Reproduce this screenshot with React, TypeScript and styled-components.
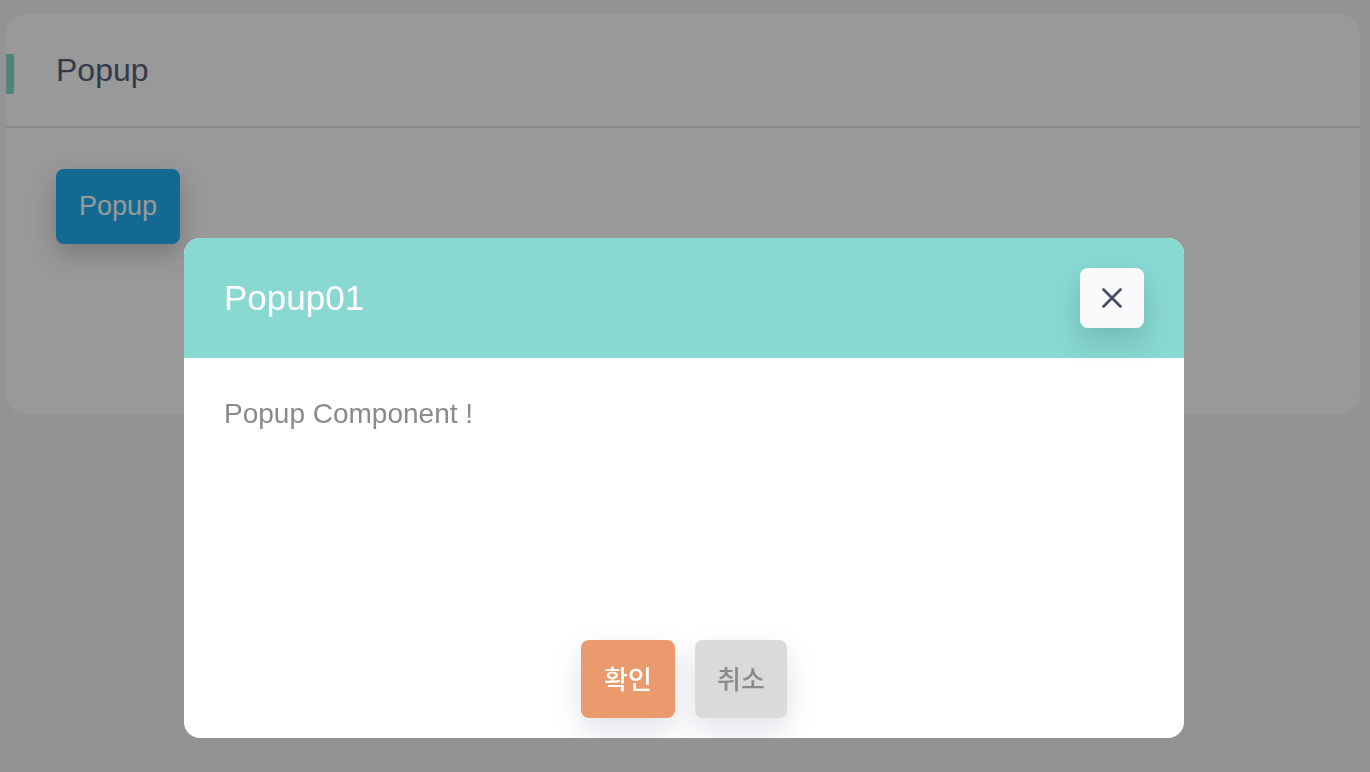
import React from "react";
import styled, { createGlobalStyle } from "styled-components";

const Global = createGlobalStyle`
  html, body { margin: 0; padding: 0; }
  body {
    background: #f3f5f8;
    font-family: "Liberation Sans", Arial, "Noto Sans CJK KR", sans-serif;
  }
`;

const Page = styled.div`
  padding: 14px 10px 0 6px;
  height: 772px;
  box-sizing: border-box;
`;

const Card = styled.section`
  background: #ffffff;
  border-radius: 20px;
  height: 400px;
  display: flex;
  flex-direction: column;
  overflow: hidden;
`;

const CardHeader = styled.header`
  height: 114px;
  display: flex;
  align-items: flex-start;
  border-bottom: 2px solid #e6e6e6;
  box-sizing: border-box;
`;

const Accent = styled.span`
  width: 8px;
  height: 40px;
  margin-top: 40px;
  background: #86dad2;
  margin-right: 42px;
`;

const CardTitle = styled.h2`
  margin: 0;
  line-height: 112px;
  font-size: 32px;
  font-weight: 400;
  color: #55627a;
`;

const CardBody = styled.div`
  padding: 41px 50px;
`;

const OpenButton = styled.button`
  height: 75px;
  width: 124px;
  padding: 0;
  border: none;
  border-radius: 8px;
  background: #1eb1f6;
  color: #ffffff;
  font-family: inherit;
  font-size: 27px;
  box-shadow: 0 10px 24px rgba(40, 40, 70, 0.25);
`;

const Overlay = styled.div`
  position: fixed;
  inset: 0;
  background: rgba(0, 0, 0, 0.4);
  display: flex;
  justify-content: center;
  align-items: flex-start;
  padding: 238px 2px 0 0;
  box-sizing: border-box;
`;

const Modal = styled.div`
  width: 1000px;
  height: 500px;
  background: #ffffff;
  border-radius: 16px;
  overflow: hidden;
  display: flex;
  flex-direction: column;
`;

const ModalHeader = styled.div`
  height: 120px;
  flex: none;
  background: #89d8d2;
  display: flex;
  align-items: center;
  justify-content: space-between;
  padding: 0 40px;
  position: relative;
  z-index: 1;
`;

const ModalTitle = styled.h3`
  margin: 0;
  font-size: 35px;
  font-weight: 400;
  color: #ffffff;
`;

const CloseButton = styled.button`
  width: 64px;
  height: 60px;
  border: none;
  border-radius: 8px;
  background: #fafafc;
  display: flex;
  align-items: center;
  justify-content: center;
  box-shadow: 0 14px 28px rgba(20, 70, 70, 0.2);
  padding: 0;
`;

const ModalBody = styled.div`
  flex: 1;
  padding: 40px 40px 0;
  font-size: 28px;
  color: #8a8a8a;
`;

const ModalFooter = styled.div`
  display: flex;
  justify-content: center;
  gap: 20px;
  padding-bottom: 20px;
`;

const ActionButton = styled.button<{ $primary?: boolean }>`
  height: 78px;
  width: ${(p) => (p.$primary ? "94px" : "92px")};
  border: none;
  border-radius: 8px;
  background: ${(p) => (p.$primary ? "#eb9a6d" : "#dadada")};
  color: ${(p) => (p.$primary ? "#ffffff" : "#8a8a8a")};
  font-family: "Noto Sans CJK KR", "Liberation Sans", sans-serif;
  font-size: 26px;
  font-weight: 500;
  line-height: 1;
  box-shadow: 0 12px 28px rgba(90, 90, 140, 0.18);
  padding: 0 0 2px;
`;

export default function App() {
  return (
    <>
      <Global />
      <Page>
        <Card>
          <CardHeader>
            <Accent />
            <CardTitle>Popup</CardTitle>
          </CardHeader>
          <CardBody>
            <OpenButton>Popup</OpenButton>
          </CardBody>
        </Card>
      </Page>
      <Overlay>
        <Modal>
          <ModalHeader>
            <ModalTitle>Popup01</ModalTitle>
            <CloseButton aria-label="close">
              <svg width="22" height="22" viewBox="0 0 22 22">
                <path d="M2.5 2.5 L19.5 19.5 M19.5 2.5 L2.5 19.5" stroke="#3f4b5e" strokeWidth="2.6" strokeLinecap="round" />
              </svg>
            </CloseButton>
          </ModalHeader>
          <ModalBody>Popup Component !</ModalBody>
          <ModalFooter>
            <ActionButton $primary>확인</ActionButton>
            <ActionButton>취소</ActionButton>
          </ModalFooter>
        </Modal>
      </Overlay>
    </>
  );
}
